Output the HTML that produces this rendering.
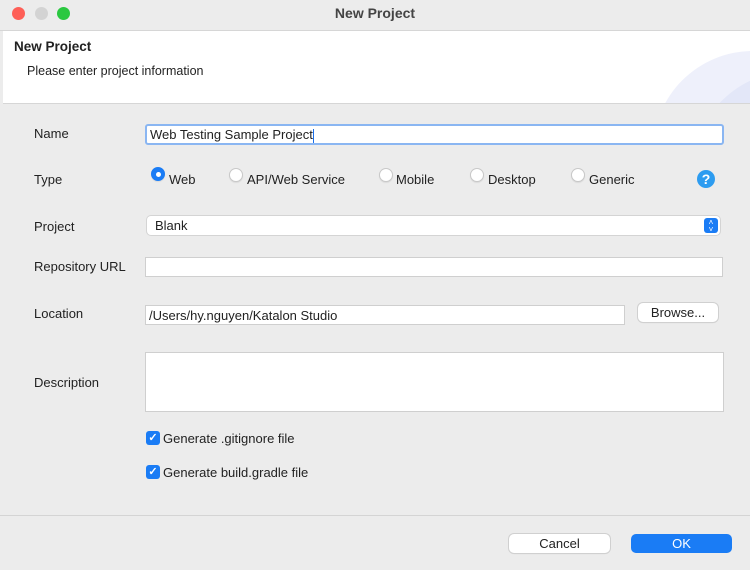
<!DOCTYPE html>
<html><head><style>
*{box-sizing:border-box;margin:0;padding:0}
body{width:750px;height:570px;overflow:hidden;background:#ececec;font-family:"Liberation Sans",sans-serif;font-size:13px;color:#222;position:relative}
.a{position:absolute}
.inp{position:absolute;background:#fff;border:1px solid #cfcfcf;}
.lbl{position:absolute;font-size:13px;color:#222}
.radio{position:absolute;width:14px;height:14px;border-radius:50%;background:#fff;border:1px solid #c8c8c8;box-shadow:0 1px 1px rgba(0,0,0,.08)}
.cb{position:absolute;width:14px;height:14px;border-radius:3px;background:#1a7cf5;color:#fff;font-size:11px;line-height:14px;text-align:center;font-weight:bold}
.btn{position:absolute;height:19px;border-radius:5px;text-align:center;line-height:19px;font-size:13px}
</style></head><body>
<div class="a" style="left:0;top:0;width:750px;height:31px;background:#ececec;border-bottom:1px solid #d6d6d6"></div>
<div class="a" style="left:12px;top:7px;width:13px;height:13px;border-radius:50%;background:#fe5f57"></div>
<div class="a" style="left:35px;top:7px;width:13px;height:13px;border-radius:50%;background:#d3d3d3"></div>
<div class="a" style="left:57px;top:7px;width:13px;height:13px;border-radius:50%;background:#2ac840"></div>
<div class="a" style="left:0;top:5px;width:750px;text-align:center;font-weight:bold;font-size:14px;color:#444">New Project</div>
<div class="a" style="left:3px;top:31px;width:747px;height:73px;background:#fff;border-bottom:1px solid #d6d6d6;overflow:hidden">
<div class="a" style="left:650px;top:20px;width:200px;height:200px;border-radius:50%;background:#eef0fb"></div>
<div class="a" style="left:690px;top:40px;width:200px;height:200px;border-radius:50%;background:#e3e7f8"></div>
</div>
<div class="a" style="left:14px;top:39px;font-weight:bold;font-size:13.5px">New Project</div>
<div class="a" style="left:27px;top:64px;font-size:12.5px">Please enter project information</div>

<div class="lbl" style="left:34px;top:126px">Name</div>
<div class="inp" style="left:145px;top:124px;width:579px;height:21px;border:2px solid #8ab6f2;border-radius:3px;padding:1px 3px;line-height:15px">Web Testing Sample Project<span style="display:inline-block;width:1.5px;height:14px;background:#1a6ee8;vertical-align:middle"></span></div>

<div class="lbl" style="left:34px;top:172px">Type</div>
<div class="radio" style="left:151px;top:167px;background:#1a7cf5;border-color:#1a7cf5"><div class="a" style="left:4px;top:4px;width:5px;height:5px;border-radius:50%;background:#fff"></div></div>
<div class="lbl" style="left:169px;top:172px">Web</div>
<div class="radio" style="left:229px;top:168px"></div>
<div class="lbl" style="left:247px;top:172px">API/Web Service</div>
<div class="radio" style="left:379px;top:168px"></div>
<div class="lbl" style="left:396px;top:172px">Mobile</div>
<div class="radio" style="left:470px;top:168px"></div>
<div class="lbl" style="left:488px;top:172px">Desktop</div>
<div class="radio" style="left:571px;top:168px"></div>
<div class="lbl" style="left:589px;top:172px">Generic</div>
<div class="a" style="left:697px;top:170px;width:18px;height:18px;border-radius:50%;background:#2d9cf0;color:#fff;font-weight:bold;font-size:14px;line-height:18px;text-align:center">?</div>

<div class="lbl" style="left:34px;top:219px">Project</div>
<div class="a" style="left:147px;top:216px;width:573px;height:19px;background:#fff;border-radius:4px;box-shadow:0 0 0 1px #d4d4d4;padding-left:8px;line-height:19px">Blank</div>
<div class="a" style="left:704px;top:218px;width:14px;height:15px;border-radius:3px;background:#1a7cf5;color:#fff;font-size:8px;line-height:7px;text-align:center;padding-top:1px">&#708;<br>&#709;</div>

<div class="lbl" style="left:34px;top:259px">Repository URL</div>
<div class="inp" style="left:145px;top:257px;width:578px;height:20px"></div>

<div class="lbl" style="left:34px;top:306px">Location</div>
<div class="inp" style="left:145px;top:305px;width:480px;height:20px;padding:2px 3px">/Users/hy.nguyen/Katalon Studio</div>
<div class="btn" style="left:638px;top:303px;width:80px;background:#fff;box-shadow:0 0 0 1px #d0d0d0,0 1px 1px rgba(0,0,0,.1)">Browse...</div>

<div class="lbl" style="left:34px;top:375px">Description</div>
<div class="inp" style="left:145px;top:352px;width:579px;height:60px"></div>

<div class="cb" style="left:146px;top:431px">✓</div>
<div class="lbl" style="left:163px;top:431px">Generate .gitignore file</div>
<div class="cb" style="left:146px;top:465px">✓</div>
<div class="lbl" style="left:163px;top:465px">Generate build.gradle file</div>

<div class="a" style="left:0;top:515px;width:750px;height:1px;background:#d4d4d4"></div>
<div class="btn" style="left:509px;top:534px;width:101px;background:#fff;box-shadow:0 0 0 1px #d0d0d0,0 1px 1px rgba(0,0,0,.1)">Cancel</div>
<div class="btn" style="left:631px;top:534px;width:101px;background:#1a7cf5;color:#fff">OK</div>
</body></html>
